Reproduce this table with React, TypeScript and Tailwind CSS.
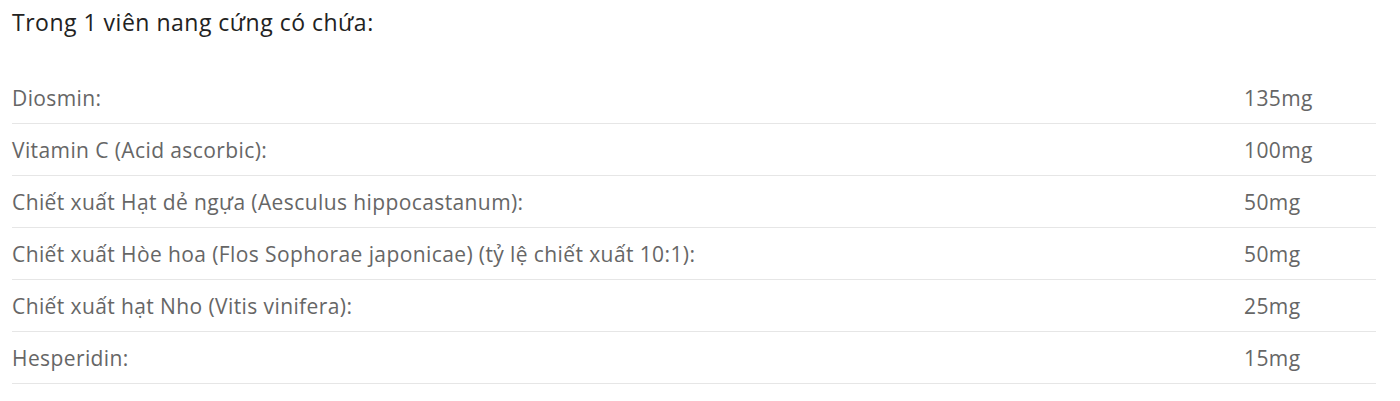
import React from "react";

const rows = [
  { name: "Diosmin:", amount: "135mg" },
  { name: "Vitamin C (Acid ascorbic):", amount: "100mg" },
  { name: "Chiết xuất Hạt dẻ ngựa (Aesculus hippocastanum):", amount: "50mg" },
  { name: "Chiết xuất Hòe hoa (Flos Sophorae japonicae) (tỷ lệ chiết xuất 10:1):", amount: "50mg" },
  { name: "Chiết xuất hạt Nho (Vitis vinifera):", amount: "25mg" },
  { name: "Hesperidin:", amount: "15mg" },
];

export default function App() {
  return (
    <div className="w-[1400px] h-[401px] bg-white px-3 font-['Open_Sans',sans-serif]">
      <p className="pt-[8px] h-[72px] text-[23px] leading-[28px] tracking-[0.5px] text-[#222]">
        Trong 1 viên nang cứng có chứa:
      </p>
      <div className="w-[1364px]">
        {rows.map((r) => (
          <div
            key={r.name}
            className="grid grid-cols-[1232px_1fr] h-[52px] pt-[2px] items-center border-b border-[#e6e6e6] text-[21px] tracking-[0.4px] text-[#666]"
          >
            <span>{r.name}</span>
            <span>{r.amount}</span>
          </div>
        ))}
      </div>
    </div>
  );
}
